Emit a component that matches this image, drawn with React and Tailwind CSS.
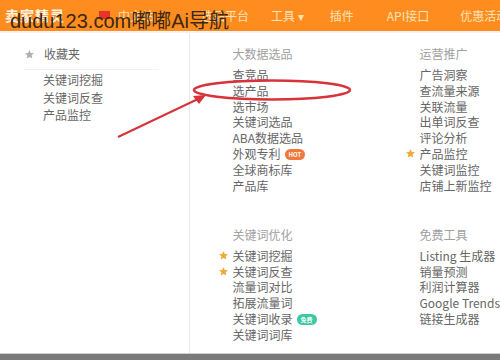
import React from "react";

const Star = ({ color = "#f0a93a" }) => (
  <svg width="11" height="11" viewBox="0 0 24 24" className="shrink-0">
    <path d="M12 2l2.9 6.6 7.1.6-5.4 4.7 1.6 7-6.2-3.7-6.2 3.7 1.6-7L2 9.2l7.1-.6z" fill={color} />
  </svg>
);

const Item = ({ children, star, badge }) => (
  <div className="relative flex items-center h-[15.85px] text-[12px] text-[#666]">
    {star && (
      <span className="absolute left-[-15px] top-[2px]">
        <Star />
      </span>
    )}
    <span>{children}</span>
    {badge === "hot" && (
      <span className="ml-[4px] h-[11px] px-[4px] rounded-full bg-[#f0783c] text-white text-[6px] leading-[11px] font-bold">HOT</span>
    )}
    {badge === "new" && (
      <span className="ml-[4px] h-[11px] px-[4px] rounded-full bg-[#3cc8a0] text-white text-[6px] leading-[11px] font-bold">免费</span>
    )}
  </div>
);

const Head = ({ children }) => (
  <div className="text-[12px] text-[#a0a0a0] h-[16px] leading-[16px] mb-[5px]">{children}</div>
);

export default function App() {
  return (
    <div
      className="relative w-[500px] h-[360px] overflow-hidden bg-white"
      style={{ fontFamily: '"Noto Sans CJK SC", "Liberation Sans", sans-serif' }}
    >
      {/* header */}
      <div className="h-[31px] bg-[#ff8c1e] flex items-center text-[12px] text-[#ffe2b8] whitespace-nowrap">
        <div className="ml-[5px] text-[14px] font-bold text-[#fff3e0] tracking-[1px]">卖家精灵</div>
        <div className="ml-[34px] w-[11px] h-[8px] bg-[#e8322a] mt-[-2px] shrink-0" />
        <div className="ml-[8px]">中文站</div>
        <div className="ml-[47px]">选品平台</div>
        <div className="ml-[22px]">工具 ▾</div>
        <div className="ml-[26px]">插件</div>
        <div className="ml-[33px]">API接口</div>
        <div className="ml-[31px]">优惠活动</div>
      </div>
      <div className="h-[2px] bg-[#f3f3f3]" />

      {/* body */}
      <div className="flex h-[320px]">
        {/* left */}
        <div className="w-[190px] border-r border-[#e8e8e8] pt-[12px]">
          <div className="flex items-center ml-[24px] mr-[30px] pb-[6px] border-b border-[#f2f2f2]">
            <Star color="#b0b0b0" />
            <span className="ml-[9px] text-[12px] text-[#666]">收藏夹</span>
          </div>
          <div className="ml-[43px] mt-[1px] text-[12px] text-[#666]">
            <div className="h-[17.5px] leading-[17.5px]">关键词挖掘</div>
            <div className="h-[17.5px] leading-[17.5px]">关键词反查</div>
            <div className="h-[17.5px] leading-[17.5px]">产品监控</div>
          </div>
        </div>

        {/* right */}
        <div className="flex-1 pl-[43px] pt-[13px] grid grid-cols-[187px_1fr] whitespace-nowrap">
          <div>
            <Head>大数据选品</Head>
            <Item>查竞品</Item>
            <Item>选产品</Item>
            <Item>选市场</Item>
            <Item>关键词选品</Item>
            <Item>ABA数据选品</Item>
            <Item badge="hot">外观专利</Item>
            <Item>全球商标库</Item>
            <Item>产品库</Item>
          </div>
          <div>
            <Head>运营推广</Head>
            <Item>广告洞察</Item>
            <Item>查流量来源</Item>
            <Item>关联流量</Item>
            <Item>出单词反查</Item>
            <Item>评论分析</Item>
            <Item star>产品监控</Item>
            <Item>关键词监控</Item>
            <Item>店铺上新监控</Item>
          </div>
          <div className="mt-[23px]">
            <Head>关键词优化</Head>
            <Item star>关键词挖掘</Item>
            <Item star>关键词反查</Item>
            <Item>流量词对比</Item>
            <Item>拓展流量词</Item>
            <Item badge="new">关键词收录</Item>
            <Item>关键词词库</Item>
          </div>
          <div className="mt-[23px]">
            <Head>免费工具</Head>
            <Item>Listing 生成器</Item>
            <Item>销量预测</Item>
            <Item>利润计算器</Item>
            <Item>Google Trends</Item>
            <Item>链接生成器</Item>
          </div>
        </div>
      </div>

      {/* bottom bar */}
      <div className="absolute left-0 right-0 bottom-0 h-[7px] bg-[#7a7a7a] border-t border-[#d0d0d0]" />

      {/* annotation */}
      <svg className="absolute left-0 top-0 pointer-events-none" width="500" height="360">
        <ellipse cx="272" cy="90" rx="78" ry="9.5" fill="none" stroke="#d8323a" strokeWidth="2.5" />
        <line x1="118" y1="137" x2="198" y2="99" stroke="#d8323a" strokeWidth="2" />
        <path d="M206 95 L193 96 L199 104 Z" fill="#d8323a" />
      </svg>

      {/* watermark */}
      <div
        className="absolute left-[10px] top-[9px] text-[20px] leading-[24px] text-[#3a2812] whitespace-nowrap"
        style={{ fontFamily: '"Liberation Sans", "Noto Sans CJK SC", sans-serif' }}
      >
        dudu123.com嘟嘟Ai导航
      </div>
    </div>
  );
}
